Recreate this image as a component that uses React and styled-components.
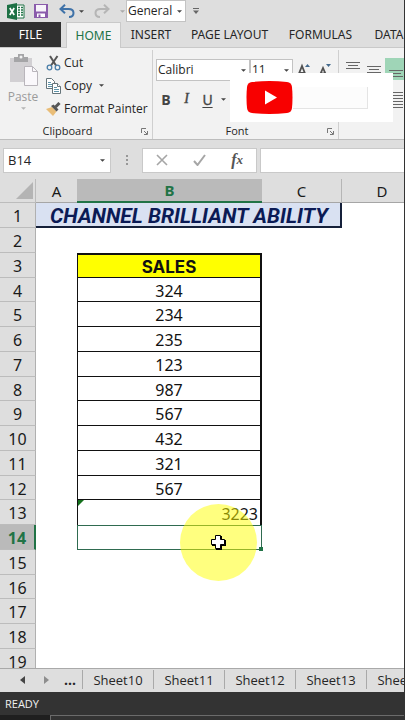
import React from "react";
import styled, { createGlobalStyle, css } from "styled-components";

const UI = '"Open Sans", "Noto Sans", sans-serif';
const GRID = '"Noto Sans", "Open Sans", sans-serif';
const GREEN = "#217346";

const GlobalStyle = createGlobalStyle`
  * { box-sizing: border-box; }
  body { margin: 0; background: #fff; font-family: ${UI}; color: #262626; }
  button, input, select { font: inherit; color: inherit; margin: 0; padding: 0; border: 0; background: none; border-radius: 0; }
  svg { display: block; flex: none; }
`;

const Page = styled.div`
  display: flex;
  flex-direction: column;
  height: 100vh;
  overflow: hidden;
  background: #dedede;
  border-right: 1px solid #333;
`;

/* ---------- quick access bar and ribbon tabs ---------- */
const QuickBar = styled.header`
  display: flex;
  align-items: center;
  height: 22px;
  padding-left: 6px;
  flex: none;
`;
const IconButton = styled.button`
  display: flex;
  align-items: center;
  justify-content: center;
  height: ${(p) => p.$h || 20}px;
  width: ${(p) => p.$w}px;
  flex: none;
`;
const SelectBox = styled.label`
  display: flex;
  align-items: center;
  width: ${(p) => p.$w}px;
  height: 22px;
  padding-right: 3px;
  background: #fff;
  border: 1px solid #c3c3c3;
  flex: none;
`;
const Select = styled.select`
  appearance: none;
  flex: 1;
  min-width: 0;
  padding-left: 1px;
  font-size: 12px;
  line-height: 16px;
  outline: none;
`;
const Tabs = styled.nav`
  display: flex;
  height: 26px;
  flex: none;
  border-bottom: 1px solid #c9c9c9;
`;
const Tab = styled.button`
  flex: none;
  width: ${(p) => p.$w}px;
  height: 25px;
  font-family: ${GRID};
  font-size: 12px;
  line-height: 24px;
  white-space: nowrap;
  text-align: center;
  ${(p) =>
    p.$kind === "file" &&
    css`
      background: #303030;
      color: #fff;
      margin-right: 5px;
    `}
  ${(p) =>
    p.$kind === "active" &&
    css`
      background: #f2f2f2;
      color: ${GREEN};
      border: 1px solid #c9c9c9;
      border-bottom: 0;
      height: 26px;
    `}
`;

/* ---------- ribbon ---------- */
const Ribbon = styled.section`
  position: relative;
  display: flex;
  height: 92px;
  flex: none;
  padding-top: 2px;
  background: #f2f2f2;
  border-bottom: 1px solid #bdbdbd;
  overflow: hidden;
`;
const Group = styled.div`
  display: flex;
  flex-direction: column;
  width: ${(p) => p.$w}px;
  flex: ${(p) => (p.$grow ? "1 0 auto" : "none")};
  border-right: 1px solid #cfcfcf;
`;
const GroupBody = styled.div`
  display: flex;
  flex: 1;
  min-height: 0;
`;
const GroupFoot = styled.div`
  display: flex;
  align-items: center;
  height: 16px;
  padding-right: 4px;
  font-size: 11px;
  line-height: 16px;
`;
const GroupName = styled.span`
  flex: 1;
  text-align: center;
  padding-right: 6px;
`;
const PasteButton = styled.button`
  display: flex;
  flex-direction: column;
  align-items: center;
  width: 46px;
  padding-top: 3px;
  font-size: 12px;
  line-height: 20px;
  color: #9b9b9b;
`;
const Commands = styled.div`
  display: flex;
  flex-direction: column;
  padding-top: 1px;
`;
const Command = styled.button`
  display: flex;
  align-items: center;
  gap: 3px;
  height: 23px;
  font-size: 12px;
  white-space: nowrap;
`;
const FontTools = styled.div`
  display: flex;
  flex-direction: column;
  gap: 8px;
  padding: 9px 0 0 3px;
`;
const ToolRow = styled.div`
  display: flex;
  align-items: center;
`;
const StyleButton = styled(IconButton)`
  font-size: 14px;
  font-weight: ${(p) => (p.$bold ? 700 : 400)};
  font-style: ${(p) => (p.$italic ? "italic" : "normal")};
  font-family: ${(p) => (p.$italic ? '"Liberation Serif", serif' : UI)};
  text-decoration: ${(p) => (p.$under ? "underline" : "none")};
  text-underline-offset: 2px;
  -webkit-text-stroke: ${(p) => (p.$bold ? 0 : "0.4px #444")};
  color: #444;
`;
const AlignTools = styled.div`
  display: flex;
  align-items: flex-start;
  padding: 8px 0 0 4px;
`;
const AlignButton = styled(IconButton)`
  align-items: flex-start;
  padding-top: ${(p) => p.$top}px;
  background: ${(p) => (p.$on ? "#9fd5b7" : "transparent")};
`;
const AlignColumn = styled.div`
  display: flex;
  flex-direction: column;
  gap: 12px;
`;
const Banner = styled.div`
  position: absolute;
  left: 230px;
  top: 25px;
  width: 163px;
  height: 49px;
  padding-left: 16px;
  display: flex;
  align-items: center;
  background: #fff;
`;
const BannerField = styled.div`
  width: 75px;
  height: 22px;
  background: #fcfcfc;
  border-right: 1px solid #e4e4e4;
  border-bottom: 1px solid #e4e4e4;
`;

/* ---------- formula bar ---------- */
const FormulaBar = styled.section`
  display: flex;
  align-items: center;
  height: 39px;
  padding: 1px 0 0 3px;
  flex: none;
`;
const NameBox = styled.div`
  display: flex;
  align-items: center;
  width: 108px;
  height: 25px;
  padding: 0 5px 0 4px;
  background: #fff;
  border: 1px solid #c9c9c9;
`;
const NameInput = styled.input`
  flex: 1;
  min-width: 0;
  font-size: 13px;
  outline: none;
`;
const Dots = styled.div`
  display: flex;
  justify-content: center;
  width: 31px;
`;
const FormulaButtons = styled.div`
  display: flex;
  align-items: center;
  justify-content: space-around;
  width: 115px;
  height: 25px;
  margin-right: 3px;
  background: #fff;
  border: 1px solid #c9c9c9;
`;
const Fx = styled(IconButton)`
  font-family: "Liberation Serif", serif;
  font-style: italic;
  font-weight: 700;
  font-size: 16px;
  color: #555;
`;
const FxSub = styled.span`
  font-size: 13px;
`;
const FormulaInput = styled.input`
  flex: 1;
  min-width: 0;
  height: 25px;
  padding: 0 4px;
  background: #fff;
  border: 1px solid #c9c9c9;
  border-right: 0;
  font-size: 13px;
  outline: none;
`;

/* ---------- sheet ---------- */
const SheetArea = styled.main`
  flex: 1 1 0;
  min-height: 0;
  overflow: hidden;
  background: #fff;
`;
const Sheet = styled.table`
  table-layout: fixed;
  border-collapse: separate;
  border-spacing: 0;
  width: max(100%, 422px);
  font-family: ${GRID};
`;
const Col = styled.col`
  width: ${(p) => (p.$w ? `${p.$w}px` : "auto")};
`;
const HeadCell = styled.th`
  height: 24px;
  padding: 0;
  background: ${(p) => (p.$on ? "#bababa" : "#dedede")};
  color: ${(p) => (p.$on ? GREEN : "#1a1a1a")};
  border-bottom: ${(p) => (p.$on ? `2px solid ${GREEN}` : "1px solid #a6a6a6")};
  border-right: ${(p) => (p.$line ? "1px solid #b5b5b5" : "0")};
  font-size: 15px;
  line-height: 20px;
  font-weight: ${(p) => (p.$on ? 700 : 400)};
`;
const Corner = styled.td`
  padding: 0 2px 0 16px;
  background: #dedede;
  border-right: 1px solid #bcbcbc;
  border-bottom: 1px solid #bcbcbc;
`;
const Row = styled.tr`
  height: 25px;
  &:nth-child(4n + 4) { height: 24px; }
`;
const RowHead = styled.th`
  padding: 2px 0 0;
  background: ${(p) => (p.$on ? "#bababa" : "#dedede")};
  color: ${(p) => (p.$on ? GREEN : "#1a1a1a")};
  border-right: ${(p) => (p.$on ? `2px solid ${GREEN}` : "1px solid #b0b0b0")};
  border-bottom: 1px solid #bcbcbc;
  font-size: 16px;
  line-height: 20px;
  font-weight: ${(p) => (p.$on ? 700 : 400)};
  text-align: center;
`;
const Cell = styled.td`
  padding: 0;
`;
const TitleCell = styled(Cell)`
  padding: 2px 0 0 2px;
  background: #d9e1f2;
  border-right: 2px solid #15203a;
  border-bottom: 2px solid #15203a;
  color: #0b1a55;
  font-family: Roboto, sans-serif;
  font-size: 21px;
  line-height: 20px;
  font-weight: 700;
  font-style: italic;
  text-align: center;
  white-space: nowrap;
`;
const DataCell = styled(Cell)`
  position: relative;
  padding-top: 2px;
  border: 0 solid #111;
  border-width: 0 2px 1px 1px;
  font-size: 16px;
  line-height: 20px;
  color: #111;
  text-align: center;
  ${(p) =>
    p.$kind === "head" &&
    css`
      background: #ffff00;
      border-top-width: 2px;
      font-family: Inter, sans-serif;
      font-size: 17px;
      font-weight: 700;
    `}
  ${(p) =>
    p.$kind === "sum" &&
    css`
      border-bottom-width: 0;
      padding-right: 2px;
      text-align: right;
    `}
  ${(p) =>
    p.$kind === "active" &&
    css`
      border: 1px solid #2f6b50;
    `}
`;
const ErrorFlag = styled.span`
  position: absolute;
  left: 0;
  top: 0;
  border-top: 6px solid #14701c;
  border-right: 6px solid transparent;
`;
const FillHandle = styled.span`
  position: absolute;
  right: -2px;
  bottom: -2px;
  width: 4px;
  height: 4px;
  background: ${GREEN};
`;
const Pointer = styled.div`
  position: absolute;
  z-index: 1;
  right: 4px;
  top: -22px;
  width: 77px;
  height: 77px;
  display: flex;
  align-items: center;
  justify-content: center;
  border-radius: 50%;
  background: rgba(255, 255, 0, 0.5);
`;

/* ---------- sheet tabs and status ---------- */
const SheetTabs = styled.nav`
  display: flex;
  align-items: center;
  height: 24px;
  flex: none;
  padding: 0 0 2px 10px;
  border-top: 1px solid #a9a9a9;
  overflow: hidden;
`;
const More = styled(IconButton)`
  font-size: 14px;
  font-weight: 700;
  line-height: 16px;
`;
const SheetTab = styled.button`
  flex: none;
  width: 71px;
  height: 19px;
  border-left: 1px solid #a9a9a9;
  font-size: 13px;
  line-height: 16px;
  text-align: center;
`;
const Status = styled.footer`
  height: 23px;
  flex: none;
  padding-left: 5px;
  background: #333;
  color: #f0f0f0;
  font-size: 11px;
  line-height: 23px;
`;
const Taskbar = styled.div`
  display: flex;
  height: 5px;
  flex: none;
  padding-left: 50px;
  background: #1f1f1f;
`;
const TaskbarPane = styled.div`
  flex: 1;
  background: #333;
  border-top: 1px solid #6b6b6b;
  border-left: 1px solid #6b6b6b;
`;

/* ---------- icons ---------- */
const Caret = ({ color = "#444" }) => (
  <svg width="5" height="3" viewBox="0 0 6 3" aria-hidden="true">
    <path d="M0 0h6L3 3z" fill={color} />
  </svg>
);
const ExcelIcon = () => (
  <svg width="18" height="17" viewBox="0 0 18 17" aria-hidden="true">
    <path d="M9 2h8v13H9z" fill="#fff" stroke="#217346" />
    <path d="M11 4.500h2M14 4.500h2M11 7h2M14 7h2M11 9.500h2M14 9.500h2M11 12h2M14 12h2" stroke="#217346" strokeWidth="1.500" />
    <path d="M0 2l10-2v17L0 15z" fill="#1e7145" />
    <path d="M2.800 5l4.400 7M7.200 5l-4.400 7" stroke="#fff" strokeWidth="1.700" />
  </svg>
);
const SaveIcon = () => (
  <svg width="14" height="14" viewBox="0 0 14 14" aria-hidden="true">
    <path d="M0 0h14v14H0z" fill="#8a5bab" />
    <path d="M2 1h10v6.500H2z" fill="#f7f3fa" />
    <path d="M3 9.500h8V13H3z" fill="#fff" />
    <path d="M4.500 10.500h2V13h-2z" fill="#8a5bab" />
  </svg>
);
const UndoIcon = ({ color, flip }) => (
  <svg width="16" height="14" viewBox="0 0 16 14" aria-hidden="true">
    <g transform={flip ? "matrix(-1 0 0 1 16 0)" : undefined} fill="none" stroke={color} strokeWidth="2">
      <path d="M6 .8L1.500 5 6 9.200" />
      <path d="M2 5h7.500C13 5 14.500 7 14.500 9c0 2.500-2 4-4.500 4" />
    </g>
  </svg>
);
const PasteIcon = () => (
  <svg width="30" height="34" viewBox="0 0 30 34" aria-hidden="true">
    <path d="M2 5h22v24H2z" fill="#d2d0d3" />
    <path d="M6 4h4V1h6v3h4v5H6z" fill="#a5a5a7" />
    <circle cx="13" cy="4" r="1.500" fill="#f2f2f2" />
    <path d="M16.500 13.500h8l5 5v14h-13z" fill="#faf8fb" stroke="#b9b5bb" />
    <path d="M24.500 13.500v5h5" fill="none" stroke="#b9b5bb" />
  </svg>
);
const CutIcon = () => (
  <svg width="15" height="16" viewBox="0 0 15 16" aria-hidden="true">
    <path d="M4 1l6 9.500M11.500 1L5 10.500" stroke="#555" strokeWidth="2" fill="none" />
    <circle cx="3.500" cy="12.500" r="2.300" fill="none" stroke="#4a7ea8" strokeWidth="1.300" />
    <circle cx="11.500" cy="12.500" r="2.300" fill="none" stroke="#4a7ea8" strokeWidth="1.300" />
  </svg>
);
const CopyIcon = () => (
  <svg width="15" height="16" viewBox="0 0 15 16" aria-hidden="true">
    <g fill="#fff" stroke="#66757a">
      <path d="M.5.5h5l3 3v7h-8z" />
      <path d="M2 4.500h3M2 6.500h5M2 8.500h5" stroke="#5e93a8" />
      <path d="M6.500 5.500h5l3 3v7h-8z" />
      <path d="M11.500 5.500v3h3" />
      <path d="M8 9.500h3M8 11.500h5M8 13.500h5" stroke="#5e93a8" />
    </g>
  </svg>
);
const BrushIcon = () => (
  <svg width="15" height="14" viewBox="0 0 15 14" aria-hidden="true">
    <path d="M0 7l6-2 4.500 4.500L7 14z" fill="#e9bd78" />
    <path d="M5 4l2.500-1.500 5 5L10.500 9.500z" fill="#555" />
    <path d="M9.500 5l4-4" stroke="#555" strokeWidth="3" />
  </svg>
);
const LauncherIcon = () => (
  <svg width="7" height="7" viewBox="0 0 7 7" aria-hidden="true">
    <path d="M.5 5V.5H5M3 3l3 3M6.500 3v3.500H3" fill="none" stroke="#777" />
  </svg>
);
const FontSizeIcon = ({ down }) => (
  <svg width="14" height="14" viewBox="0 0 14 14" aria-hidden="true">
    <path d={down ? "M1.500 13L5 5l3.500 8M3 10.500h4" : "M1 13L5 3l4 10M2.500 10h5"} fill="none" stroke="#505050" strokeWidth="1.800" />
    <path d={down ? "M8 1h5l-2.500 3z" : "M8 4h5l-2.500-3z"} fill="#42688c" />
  </svg>
);
const LinesIcon = ({ rows = 3, wide = true }) => (
  <svg width="14" height={rows * 3 + 1} viewBox={`0 0 14 ${rows * 3 + 1}`} aria-hidden="true">
    {Array.from({ length: rows }, (_, i) => (
      <path key={i} d={wide && i % 2 ? `M2 ${i * 3 + 0.5}h10` : `M0 ${i * 3 + 0.5}h14`} stroke="#666" />
    ))}
  </svg>
);
const PlayLogo = () => (
  <svg width="47" height="33" viewBox="0 0 47 33" role="img" aria-label="YouTube">
    <path d="M6 1Q23.500-.8 41 1q4.500.5 5 5 1 10.500 0 21-.5 4.500-5 5-17.500 1.800-35 0-4.500-.5-5-5Q0 16.500 1 6q.5-4.500 5-5z" fill="#f80000" />
    <path d="M19 9.500l12 7-12 7z" fill="#fff" />
  </svg>
);
const CrossIcon = () => (
  <svg width="12" height="12" viewBox="0 0 12 12" aria-hidden="true">
    <path d="M1 1l10 10M11 1L1 11" stroke="#a6a6a6" strokeWidth="1.600" />
  </svg>
);
const CheckIcon = () => (
  <svg width="13" height="12" viewBox="0 0 13 12" aria-hidden="true">
    <path d="M1 7l3.500 4L12 1" fill="none" stroke="#a6a6a6" strokeWidth="2" />
  </svg>
);
const DotsIcon = () => (
  <svg width="2" height="10" viewBox="0 0 2 10" aria-hidden="true">
    <path d="M0 1h2M0 5h2M0 9h2" stroke="#808080" strokeWidth="1.500" />
  </svg>
);
const CornerIcon = () => (
  <svg width="17" height="17" viewBox="0 0 17 17" aria-hidden="true">
    <path d="M17 0v17H0z" fill="#b4b4b4" />
  </svg>
);
const ArrowIcon = ({ next }) => (
  <svg width="5" height="8" viewBox="0 0 5 8" aria-hidden="true">
    <path d={next ? "M0 0l5 4-5 4z" : "M5 0L0 4l5 4z"} fill={next ? "#8d8d8d" : "#444"} />
  </svg>
);
const OverflowIcon = () => (
  <svg width="6" height="6" viewBox="0 0 6 6" aria-hidden="true">
    <path d="M0 .5h6" stroke="#666" />
    <path d="M0 2.500h6L3 6z" fill="#666" />
  </svg>
);
const CrossPointer = () => (
  <svg width="17" height="17" viewBox="0 0 17 17" aria-hidden="true">
    <path d="M6 2h6v4h4v6h-4v4H6v-4H2V6h4z" fill="#000" />
    <path d="M5.500 1.500h5v4h4v5h-4v4h-5v-4h-4v-5h4z" fill="#fff" stroke="#000" />
  </svg>
);

/* ---------- data ---------- */
const tabs = [
  { name: "FILE", w: 61, kind: "file" },
  { name: "HOME", w: 55, kind: "active" },
  { name: "INSERT", w: 60 },
  { name: "PAGE LAYOUT", w: 97 },
  { name: "FORMULAS", w: 85 },
  { name: "DATA", w: 52 },
];
const values = { 3: "SALES", 4: 324, 5: 234, 6: 235, 7: 123, 8: 987, 9: 567, 10: 432, 11: 321, 12: 567, 13: 3223, 14: "" };
const kinds = { 3: "head", 13: "sum", 14: "active" };
const rows = Array.from({ length: 18 }, (_, i) => i + 2);
const sheets = ["Sheet10", "Sheet11", "Sheet12", "Sheet13", "Sheet14"];

export default function App() {
  return (
    <Page>
      <GlobalStyle />
      <QuickBar>
        <IconButton $w={19} aria-label="Excel"><ExcelIcon /></IconButton>
        <IconButton $w={32} aria-label="Save"><SaveIcon /></IconButton>
        <IconButton $w={20} aria-label="Undo"><UndoIcon color="#3f72a8" /></IconButton>
        <IconButton $w={9} aria-label="Undo history"><Caret /></IconButton>
        <IconButton $w={32} aria-label="Redo"><UndoIcon color="#b5b5b5" flip /></IconButton>
        <IconButton $w={8} aria-label="Redo history"><Caret color="#aaa" /></IconButton>
        <SelectBox $w={60}>
          <Select aria-label="Number format" defaultValue="General"><option>General</option></Select>
          <Caret />
        </SelectBox>
        <IconButton $w={20} aria-label="Customize toolbar"><OverflowIcon /></IconButton>
      </QuickBar>
      <Tabs>
        {tabs.map((t) => (
          <Tab key={t.name} $w={t.w} $kind={t.kind}>{t.name}</Tab>
        ))}
      </Tabs>

      <Ribbon>
        <Group $w={153}>
          <GroupBody>
            <PasteButton><PasteIcon />Paste<Caret color="#b5b5b5" /></PasteButton>
            <Commands>
              <Command><CutIcon />Cut</Command>
              <Command><CopyIcon />Copy<IconButton as="span" $w={12}><Caret /></IconButton></Command>
              <Command><BrushIcon />Format Painter</Command>
            </Commands>
          </GroupBody>
          <GroupFoot><GroupName>Clipboard</GroupName><LauncherIcon /></GroupFoot>
        </Group>
        <Group $w={186}>
          <GroupBody>
            <FontTools>
              <ToolRow>
                <SelectBox $w={94}>
                  <Select aria-label="Font" defaultValue="Calibri"><option>Calibri</option></Select>
                  <Caret />
                </SelectBox>
                <SelectBox $w={43}>
                  <Select aria-label="Font size" defaultValue="11"><option>11</option></Select>
                  <Caret />
                </SelectBox>
                <IconButton $w={22} aria-label="Increase font size"><FontSizeIcon /></IconButton>
                <IconButton $w={20} aria-label="Decrease font size"><FontSizeIcon down /></IconButton>
              </ToolRow>
              <ToolRow>
                <StyleButton $w={20} $bold>B</StyleButton>
                <StyleButton $w={21} $italic>I</StyleButton>
                <StyleButton $w={21} $under>U</StyleButton>
                <IconButton $w={10} aria-label="Underline style"><Caret /></IconButton>
              </ToolRow>
            </FontTools>
          </GroupBody>
          <GroupFoot><GroupName>Font</GroupName><LauncherIcon /></GroupFoot>
        </Group>
        <Group $w={90} $grow>
          <AlignTools>
            <AlignButton $w={20} $h={22} $top={4} aria-label="Top align"><LinesIcon /></AlignButton>
            <AlignButton $w={22} $h={22} $top={8} aria-label="Middle align"><LinesIcon /></AlignButton>
            <AlignColumn>
              <AlignButton $w={21} $h={22} $top={12} $on aria-label="Bottom align"><LinesIcon /></AlignButton>
              <AlignButton $w={21} $h={20} $top={0} aria-label="Justify"><LinesIcon rows={6} wide={false} /></AlignButton>
            </AlignColumn>
          </AlignTools>
        </Group>
        <Banner><PlayLogo /><BannerField /></Banner>
      </Ribbon>

      <FormulaBar>
        <NameBox><NameInput aria-label="Name box" defaultValue="B14" /><Caret /></NameBox>
        <Dots><DotsIcon /></Dots>
        <FormulaButtons>
          <IconButton $w={20} aria-label="Cancel"><CrossIcon /></IconButton>
          <IconButton $w={20} aria-label="Enter"><CheckIcon /></IconButton>
          <Fx $w={20} aria-label="Insert function">f<FxSub>x</FxSub></Fx>
        </FormulaButtons>
        <FormulaInput aria-label="Formula" />
      </FormulaBar>

      <SheetArea>
        <Sheet>
          <colgroup>
            <Col $w={36} /><Col $w={41} /><Col $w={185} /><Col $w={80} /><Col />
          </colgroup>
          <thead>
            <tr>
              <Corner><CornerIcon /></Corner>
              <HeadCell scope="col">A</HeadCell>
              <HeadCell scope="col" $on>B</HeadCell>
              <HeadCell scope="col" $line>C</HeadCell>
              <HeadCell scope="col">D</HeadCell>
            </tr>
          </thead>
          <tbody>
            <Row>
              <RowHead scope="row">1</RowHead>
              <TitleCell colSpan={3}>CHANNEL BRILLIANT ABILITY</TitleCell>
              <Cell />
            </Row>
            {rows.map((n) => (
              <Row key={n}>
                <RowHead scope="row" $on={n === 14}>{n}</RowHead>
                <Cell />
                {n in values ? (
                  <DataCell $kind={kinds[n]}>
                    {values[n]}
                    {n === 13 && <ErrorFlag />}
                    {n === 14 && <><FillHandle /><Pointer><CrossPointer /></Pointer></>}
                  </DataCell>
                ) : (
                  <Cell />
                )}
                <Cell />
                <Cell />
              </Row>
            ))}
          </tbody>
        </Sheet>
      </SheetArea>

      <SheetTabs>
        <IconButton $w={24} aria-label="Previous sheets"><ArrowIcon /></IconButton>
        <IconButton $w={24} aria-label="Next sheets"><ArrowIcon next /></IconButton>
        <More $w={24}>...</More>
        {sheets.map((s) => <SheetTab key={s}>{s}</SheetTab>)}
      </SheetTabs>
      <Status>READY</Status>
      <Taskbar><TaskbarPane /></Taskbar>
    </Page>
  );
}
